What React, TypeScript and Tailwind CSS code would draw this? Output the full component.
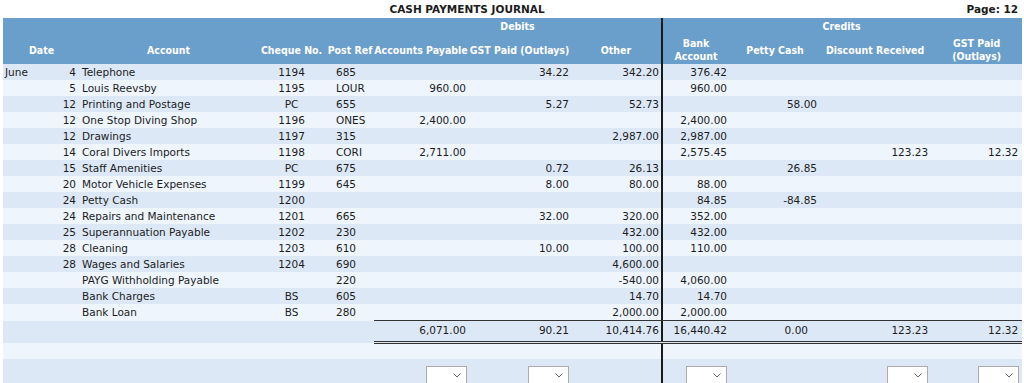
import React from 'react';

type Row = {
  month?: string;
  day?: string;
  account: string;
  cheque?: string;
  postRef?: string;
  ap?: string;
  gst?: string;
  other?: string;
  bank?: string;
  petty?: string;
  discount?: string;
  gstCr?: string;
};

const rows: Row[] = [
  { month: 'June', day: '4', account: 'Telephone', cheque: '1194', postRef: '685', gst: '34.22', other: '342.20', bank: '376.42' },
  { day: '5', account: 'Louis Reevsby', cheque: '1195', postRef: 'LOUR', ap: '960.00', bank: '960.00' },
  { day: '12', account: 'Printing and Postage', cheque: 'PC', postRef: '655', gst: '5.27', other: '52.73', petty: '58.00' },
  { day: '12', account: 'One Stop Diving Shop', cheque: '1196', postRef: 'ONES', ap: '2,400.00', bank: '2,400.00' },
  { day: '12', account: 'Drawings', cheque: '1197', postRef: '315', other: '2,987.00', bank: '2,987.00' },
  { day: '14', account: 'Coral Divers Imports', cheque: '1198', postRef: 'CORI', ap: '2,711.00', bank: '2,575.45', discount: '123.23', gstCr: '12.32' },
  { day: '15', account: 'Staff Amenities', cheque: 'PC', postRef: '675', gst: '0.72', other: '26.13', petty: '26.85' },
  { day: '20', account: 'Motor Vehicle Expenses', cheque: '1199', postRef: '645', gst: '8.00', other: '80.00', bank: '88.00' },
  { day: '24', account: 'Petty Cash', cheque: '1200', bank: '84.85', petty: '-84.85' },
  { day: '24', account: 'Repairs and Maintenance', cheque: '1201', postRef: '665', gst: '32.00', other: '320.00', bank: '352.00' },
  { day: '25', account: 'Superannuation Payable', cheque: '1202', postRef: '230', other: '432.00', bank: '432.00' },
  { day: '28', account: 'Cleaning', cheque: '1203', postRef: '610', gst: '10.00', other: '100.00', bank: '110.00' },
  { day: '28', account: 'Wages and Salaries', cheque: '1204', postRef: '690', other: '4,600.00' },
  { account: 'PAYG Withholding Payable', postRef: '220', other: '-540.00', bank: '4,060.00' },
  { account: 'Bank Charges', cheque: 'BS', postRef: '605', other: '14.70', bank: '14.70' },
  { account: 'Bank Loan', cheque: 'BS', postRef: '280', other: '2,000.00', bank: '2,000.00' },
];

const widths = [77, 177, 69, 48, 94, 103, 90, 70, 88, 112, 91];

const rowBg = (i: number) => (i % 2 === 0 ? 'bg-[#dde8f6]' : 'bg-[#eef5fd]');

// the black divider between debits and credits
const divider = 'shadow-[inset_2px_0_0_#1a1a1a]';

function Dropdown() {
  return (
    <div className="ml-auto w-[41px] h-[20px] border border-[#ababab] bg-white flex items-start justify-end pt-[6px] pr-[5px]">
      <svg width="8" height="5" viewBox="0 0 8 5">
        <path d="M0.5 0.5 L4 4 L7.5 0.5" stroke="#666" strokeWidth="1" fill="none" />
      </svg>
    </div>
  );
}

export default function App() {
  const total = 'border-t border-b-[3px] border-double border-[#333]';

  return (
    <div className="w-[1024px] h-[383px] overflow-hidden bg-white font-['DejaVu_Sans',Verdana,sans-serif] text-[10.5px] text-[#1c1c1c]">
      <table className="ml-[3px] w-[1019px] table-fixed border-collapse">
        <colgroup>
          {widths.map((w, i) => (
            <col key={i} style={{ width: w }} />
          ))}
        </colgroup>
        <tbody>
          <tr className="h-[18px]">
            <td colSpan={10} className="text-center font-bold align-middle pt-[2px]">
              CASH PAYMENTS JOURNAL
            </td>
            <td className="text-right font-bold pr-[4px] pt-[2px]">Page: 12</td>
          </tr>

          <tr className="h-[18px] bg-[#6a9ecb] text-white font-bold font-['DejaVu_Sans_Condensed','DejaVu_Sans',sans-serif]">
            <td colSpan={4}></td>
            <td colSpan={3} className="text-center">Debits</td>
            <td colSpan={4} className={`text-center ${divider}`}>Credits</td>
          </tr>
          <tr className="h-[28px] bg-[#6a9ecb] text-white font-bold leading-[13px] font-['DejaVu_Sans_Condensed','DejaVu_Sans',sans-serif]">
            <td className="text-center">Date</td>
            <td className="text-center">Account</td>
            <td className="text-center whitespace-nowrap">Cheque No.</td>
            <td className="text-center whitespace-nowrap">Post Ref</td>
            <td className="text-center whitespace-nowrap">Accounts Payable</td>
            <td className="text-center whitespace-nowrap">GST Paid (Outlays)</td>
            <td className="text-center">Other</td>
            <td className={`text-center ${divider}`}>
              Bank
              <br />
              Account
            </td>
            <td className="text-center">Petty Cash</td>
            <td className="text-center whitespace-nowrap">Discount Received</td>
            <td className="text-center">
              GST Paid
              <br />
              (Outlays)
            </td>
          </tr>

          {rows.map((r, i) => (
            <tr key={i} className={`h-[16px] leading-[16px] ${rowBg(i)}`}>
              <td className="p-0">
                <div className="flex justify-between pl-[2px] pr-[4px]">
                  <span>{r.month}</span>
                  <span>{r.day}</span>
                </div>
              </td>
              <td className="pl-[2px] whitespace-nowrap">{r.account}</td>
              <td className="text-center">{r.cheque}</td>
              <td className="pl-[10px]">{r.postRef}</td>
              <td className="text-right pr-[2px]">{r.ap}</td>
              <td className="text-right pr-[2px]">{r.gst}</td>
              <td className="text-right pr-[2px]">{r.other}</td>
              <td className={`text-right pr-[4px] ${divider}`}>{r.bank}</td>
              <td className="text-right pr-[2px]">{r.petty}</td>
              <td className="text-right pr-[3px]">{r.discount}</td>
              <td className="text-right pr-[4px]">{r.gstCr}</td>
            </tr>
          ))}

          <tr className="h-[22px] bg-[#dde8f6]">
            <td colSpan={4}></td>
            <td className={`text-right pr-[2px] ${total}`}>6,071.00</td>
            <td className={`text-right pr-[2px] ${total}`}>90.21</td>
            <td className={`text-right pr-[2px] ${total}`}>10,414.76</td>
            <td className={`text-right pr-[4px] ${total} ${divider}`}>16,440.42</td>
            <td className={`text-right pr-[11px] ${total}`}>0.00</td>
            <td className={`text-right pr-[3px] ${total}`}>123.23</td>
            <td className={`text-right pr-[4px] ${total}`}>12.32</td>
          </tr>

          <tr className="h-[16px] bg-[#eef5fd]">
            <td colSpan={7}></td>
            <td className={divider}></td>
            <td colSpan={3}></td>
          </tr>

          <tr className="h-[30px] bg-[#dde8f6] align-top">
            <td colSpan={4}></td>
            <td className="pt-[7px] pr-[1px]">
              <Dropdown />
            </td>
            <td className="pt-[7px] pr-[2px]">
              <Dropdown />
            </td>
            <td></td>
            <td className={`pt-[7px] pr-[4px] ${divider}`}>
              <Dropdown />
            </td>
            <td></td>
            <td className="pt-[7px] pr-[3px]">
              <Dropdown />
            </td>
            <td className="pt-[7px] pr-[3px]">
              <Dropdown />
            </td>
          </tr>
        </tbody>
      </table>
    </div>
  );
}
